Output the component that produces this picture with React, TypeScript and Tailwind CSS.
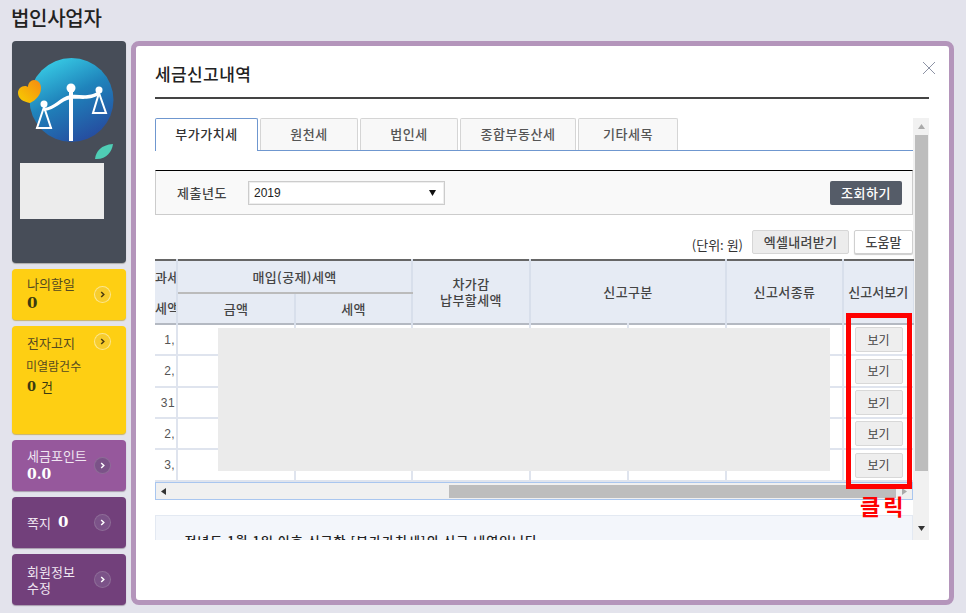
const KR = "font-['Noto_Sans_CJK_KR','Noto_Sans',sans-serif]";
const NUM = "font-['DejaVu_Serif',serif] font-bold";

function Arrow({ tone, className = '' }: { tone: 'yellow' | 'purple'; className?: string }) {
  return (
    <span
      className={`flex h-[15px] w-[15px] shrink-0 items-center justify-center rounded-full ${
        tone === 'yellow'
          ? 'bg-[#f7cc2c] shadow-[0_0_0_1px_#fbe68f]'
          : 'bg-[#7b5288] shadow-[0_0_0_1px_#8d6c97]'
      } ${className}`}
    >
      <svg width="7" height="7" viewBox="0 0 7 7" fill="none" stroke={tone === 'yellow' ? '#4a3a10' : '#ffffff'} strokeWidth="1.5">
        <path d="M2.2 1l2.6 2.5L2.2 6" />
      </svg>
    </span>
  );
}

function Logo() {
  return (
    <svg width="114" height="120" viewBox="0 0 114 120" className="block">
      <defs>
        <linearGradient id="ball" x1="0.25" y1="0" x2="0.75" y2="1">
          <stop offset="0" stopColor="#38cde6" />
          <stop offset="0.45" stopColor="#1f83bb" />
          <stop offset="1" stopColor="#26489d" />
        </linearGradient>
        <linearGradient id="heart" x1="0" y1="1" x2="1" y2="0">
          <stop offset="0" stopColor="#f7cf00" />
          <stop offset="1" stopColor="#f58a12" />
        </linearGradient>
      </defs>
      <circle cx="59.5" cy="59" r="42" fill="url(#ball)" />
      <path d="M6 52c0-4 3-7 7-7 1 0 2 0 3 1 0-4 3-7 6-7 4 0 7 3 7 8 0 7-5 12-11 15-6-1-12-4-12-10z" fill="url(#heart)" />
      <path d="M83 118c1-8 6-14 18-15-1 8-7 16-18 15z" fill="#4fcdb5" />
      <g fill="#ffffff">
        <rect x="57" y="47" width="4" height="53" />
        <circle cx="59" cy="47" r="4.5" />
        <circle cx="32" cy="63" r="3.5" />
        <circle cx="87" cy="49" r="3.5" />
        <path d="M32 67c11-1 15-11 27-13 10-1 16 3 28-4v4c-11 6-18 3-28 4-11 2-15 11-27 12z" />
      </g>
      <g fill="none" stroke="#ffffff" strokeWidth="2">
        <path d="M32 66l-7 21h14zM24 87h16" />
        <path d="M87 52l-6 20h13zM81 72h13" />
      </g>
    </svg>
  );
}

const rows = [
  { id: 1, text: '1,', h: 'h-[31px]' },
  { id: 2, text: '2,', h: 'h-[32px]' },
  { id: 3, text: '31', h: 'h-[31px]' },
  { id: 4, text: '2,', h: 'h-[31px]' },
  { id: 5, text: '3,', h: 'h-[32px]' },
];

export default function App() {
  return (
    <div className={`flex h-[613px] w-[966px] flex-col overflow-hidden bg-[#e3e3ec] ${KR}`}>
      <h1 className="mb-[10px] ml-[11px] mt-[4px] h-[27px] text-[20px] font-medium leading-[27px] tracking-[-0.3px] text-[#222]">법인사업자</h1>

      <div className="flex items-start pl-[12px]">
        {/* sidebar */}
        <div className="flex w-[114px] flex-col gap-[6px]">
          <div className="h-[222px] rounded-[4px] bg-[#474d58] shadow-[0_1px_1px_#aaa]">
            <Logo />
            <div className="ml-[8px] mt-[2px] h-[56px] w-[84px] bg-[#ececec]" />
          </div>

          <div className="flex h-[51px] items-center justify-between rounded-[4px] bg-[#fecf13] pl-[15px] pr-[16px] shadow-[0_1px_1px_#c9b36a]">
            <div className="text-[#554a20]">
              <div className="text-[13px] leading-[16px]">나의할일</div>
              <div className={`${NUM} mt-[1px] text-[15px] leading-[20px] text-[#3b3a10]`}>0</div>
            </div>
            <Arrow tone="yellow" />
          </div>

          <div className="flex h-[108px] items-start justify-between rounded-[4px] bg-[#fecf13] pl-[15px] pr-[16px] pt-[8px] shadow-[0_1px_1px_#c9b36a]">
            <div className="text-[#554a20]">
              <div className="text-[13px] leading-[18px]">전자고지</div>
              <div className="-ml-[1px] mt-[5px] text-[12px] leading-[18px]">미열람건수</div>
              <div className="mt-[3px] flex items-center gap-[5px] text-[13px] leading-[18px] text-[#3b3a10]">
                <span className={`${NUM} text-[13px]`}>0</span>
                <span>건</span>
              </div>
            </div>
            <Arrow tone="yellow" />
          </div>

          <div className="flex h-[51px] items-center justify-between rounded-[4px] bg-[#96589c] pl-[15px] pr-[16px] shadow-[0_1px_1px_#a79bad]">
            <div className="text-[#f0e6f2]">
              <div className="text-[13px] leading-[16px]">세금포인트</div>
              <div className={`${NUM} mt-[1px] text-[14px] leading-[19px] text-white`}>0.0</div>
            </div>
            <Arrow tone="purple" />
          </div>

          <div className="flex h-[51px] items-center justify-between rounded-[4px] bg-[#72407b] pl-[15px] pr-[16px] shadow-[0_1px_1px_#a79bad]">
            <div className="flex items-center gap-[7px] text-[13px] text-[#f0e6f2]">
              <span>쪽지</span>
              <span className={`${NUM} text-[15px] text-white`}>0</span>
            </div>
            <Arrow tone="purple" />
          </div>

          <div className="flex h-[51px] items-center justify-between rounded-[4px] bg-[#72407b] pl-[15px] pr-[16px] shadow-[0_1px_1px_#a79bad]">
            <div className="text-[13px] text-[#f0e6f2]">
              <div className="h-[16px] leading-[16px]">회원정보</div>
              <div className="h-[16px] leading-[16px]">수정</div>
            </div>
            <Arrow tone="purple" />
          </div>
        </div>

        {/* modal */}
        <div className="relative ml-[5px] h-[564px] w-[823px] rounded-[8px] border-[5px] border-[#b495bb] bg-white pl-[19px] pr-[20px] pt-[15px]">
          <h2 className="h-[36px] text-[17px] font-medium leading-[26px] tracking-[0.4px] text-[#222]">세금신고내역</h2>
          <div className="h-[2px] bg-[#444]" />
          <button className="absolute right-[13px] top-[15px] text-[#8d93a5]">
            <svg width="14" height="14" viewBox="0 0 14 14" stroke="currentColor" strokeWidth="1" className="block">
              <path d="M1 1l12 12M13 1L1 13" />
            </svg>
          </button>

          <div className="mt-[19px] flex h-[422px] overflow-hidden">
            <div className="w-[758px] shrink-0">
              {/* tabs */}
              <div className="flex h-[33px] gap-[2px] border-b border-[#6f97cf] text-[13px] font-medium tracking-[0.5px] text-[#555]">
                <div className="flex h-[33px] w-[103px] items-center justify-center rounded-t-[2px] border border-b-0 border-[#6f97cf] bg-white pb-[2px] text-[#333]">부가가치세</div>
                <div className="flex h-[32px] w-[98px] items-center justify-center rounded-t-[2px] border border-b-0 border-[#d5d5d5] bg-[#f8f8f8] pb-[2px]">원천세</div>
                <div className="flex h-[32px] w-[98px] items-center justify-center rounded-t-[2px] border border-b-0 border-[#d5d5d5] bg-[#f8f8f8] pb-[2px]">법인세</div>
                <div className="flex h-[32px] w-[116px] items-center justify-center rounded-t-[2px] border border-b-0 border-[#d5d5d5] bg-[#f8f8f8] pb-[2px]">종합부동산세</div>
                <div className="flex h-[32px] w-[100px] items-center justify-center rounded-t-[2px] border border-b-0 border-[#d5d5d5] bg-[#f8f8f8] pb-[2px]">기타세목</div>
              </div>

              {/* search */}
              <div className="mt-[19px] flex h-[45px] items-center justify-between border border-t-black border-[#ccc] bg-[#f9f9f9] pl-[21px] pr-[10px]">
                <div className="flex items-center">
                  <span className="w-[71px] text-[13px] font-medium tracking-[0.5px] text-[#444]">제출년도</span>
                  <div className="flex h-[24px] w-[197px] items-center justify-between border border-[#ccc] bg-white pl-[5px] pr-[8px] font-['Liberation_Sans',sans-serif] text-[12px] text-[#222] shadow-[inset_0_0_0_1px_#eee]">
                    2019
                    <svg width="7" height="6" viewBox="0 0 7 6" className="block">
                      <path d="M0 0h7L3.5 6z" fill="#111" />
                    </svg>
                  </div>
                </div>
                <button className="h-[24px] w-[72px] rounded-[2px] bg-[#555c68] text-[13px] font-medium tracking-[0.5px] text-white">조회하기</button>
              </div>

              {/* table toolbar */}
              <div className="mt-[15px] flex h-[24px] items-center justify-end">
                <span className="mr-[9px] mt-[6px] text-[13px] leading-[18px] text-[#333]">(단위: 원)</span>
                <button className="h-[24px] w-[97px] rounded-[2px] border border-[#d6d6d6] bg-[#ececec] text-[13px] font-medium tracking-[0.3px] text-[#444]">엑셀내려받기</button>
                <button className="ml-[5px] h-[24px] w-[59px] rounded-[2px] border border-[#d0d0d0] bg-white text-[13px] font-medium text-[#444] shadow-[0_1px_1px_#ccc]">도움말</button>
              </div>

              {/* table */}
              <div className="relative mt-[5px]">
                <table className="w-[758px] table-fixed border-collapse border-t-2 border-[#666] text-[13px] tracking-[0.4px] text-[#444]">
                  <colgroup>
                    <col className="w-[22px]" />
                    <col className="w-[118px]" />
                    <col className="w-[117px]" />
                    <col className="w-[118px]" />
                    <col className="w-[98px]" />
                    <col className="w-[98px]" />
                    <col className="w-[117px]" />
                    <col className="w-[70px]" />
                  </colgroup>
                  <thead className="bg-[#e6ebf4]">
                    <tr className="h-[33px]">
                      <th className="overflow-hidden whitespace-nowrap border-r-2 border-[#d8dfeb] text-left font-medium">과세</th>
                      <th colSpan={2} className="border-b-2 border-r-2 border-[#d8dfeb] border-b-[#bbb] font-medium">매입(공제)세액</th>
                      <th rowSpan={2} className="border-r-2 border-[#d8dfeb] font-medium leading-[16px]">차가감<br />납부할세액</th>
                      <th rowSpan={2} colSpan={2} className="border-r-2 border-[#d8dfeb] font-medium">신고구분</th>
                      <th rowSpan={2} className="border-r-2 border-[#d8dfeb] font-medium">신고서종류</th>
                      <th rowSpan={2} className="overflow-hidden whitespace-nowrap border-r border-[#d8dfeb] font-medium tracking-normal">신고서보기</th>
                    </tr>
                    <tr className="h-[31px] border-b-2 border-[#b4b9c2]">
                      <th className="overflow-hidden whitespace-nowrap border-r-2 border-[#d8dfeb] text-left font-medium">세액</th>
                      <th className="border-r-2 border-[#d8dfeb] font-medium">금액</th>
                      <th className="border-r-2 border-[#d8dfeb] font-medium">세액</th>
                    </tr>
                  </thead>
                  <tbody>
                    {rows.map((r) => (
                      <tr key={r.id} className={`${r.h} border-b-2 border-[#dfe4ee]`}>
                        <td className="border-r-2 border-[#dfe4ee] pr-[1px] text-right font-['Liberation_Sans',sans-serif] text-[12px] text-[#555]">{r.text}</td>
                        <td className="border-r-2 border-[#dfe4ee]" />
                        <td className="border-r-2 border-[#dfe4ee]" />
                        <td className="border-r-2 border-[#dfe4ee]" />
                        <td className="border-r-2 border-[#dfe4ee]" />
                        <td className="border-r-2 border-[#dfe4ee]" />
                        <td className="border-r-2 border-[#dfe4ee]" />
                        <td className="text-center">
                          <button className="h-[25px] w-[48px] rounded-[2px] border border-[#d8d8d8] bg-[#eeeeee] text-[12px] tracking-normal text-[#444]">보기</button>
                        </td>
                      </tr>
                    ))}
                  </tbody>
                </table>

                {/* horizontal scrollbar */}
                <div className="flex h-[18px] items-center border border-[#a9c6ef] bg-[#f0f0f0]">
                  <svg width="5" height="7" viewBox="0 0 5 7" className="ml-[5px] block shrink-0">
                    <path d="M5 0v7L0 3.5z" fill="#333" />
                  </svg>
                  <div className="ml-[283px] h-[13px] w-[447px] bg-[#bdbdbd]" />
                  <svg width="5" height="7" viewBox="0 0 5 7" className="ml-[6px] block shrink-0">
                    <path d="M0 0v7l5-3.5z" fill="#aaa" />
                  </svg>
                </div>

                {/* masked figures and the red call-out */}
                <div className="absolute left-[63px] top-[69px] h-[143px] w-[612px] bg-[#ebebeb]" />
                <div className="absolute left-[691px] top-[54px] h-[176px] w-[66px] border-[5px] border-[#ff0000]" />
                <div className="absolute left-[705px] top-[233px] text-[22px] font-bold leading-[26px] tracking-[3px] text-[#ff0000]">클릭</div>
              </div>

              {/* note */}
              <div className="mt-[15px] h-[60px] border border-[#e3e9f2] bg-[#f3f6fb] pl-[16px] pt-[15px] text-[13px] font-medium tracking-[1px] text-[#222]">
                · 전년도 1월 1일 이후 신고한 [부가가치세]의 신고 내역입니다.
              </div>
            </div>

            {/* vertical scrollbar */}
            <div className="flex h-[422px] w-[16px] shrink-0 flex-col items-center bg-[#f1f1f1]">
              <svg width="7" height="5" viewBox="0 0 7 5" className="mt-[6px] block shrink-0">
                <path d="M0 5h7L3.5 0z" fill="#aaa" />
              </svg>
              <div className="mt-[6px] h-[336px] w-[13px] bg-[#bdbdbd]" />
              <svg width="7" height="5" viewBox="0 0 7 5" className="mt-[55px] block shrink-0">
                <path d="M0 0h7L3.5 5z" fill="#333" />
              </svg>
            </div>
          </div>
        </div>
      </div>
    </div>
  );
}
